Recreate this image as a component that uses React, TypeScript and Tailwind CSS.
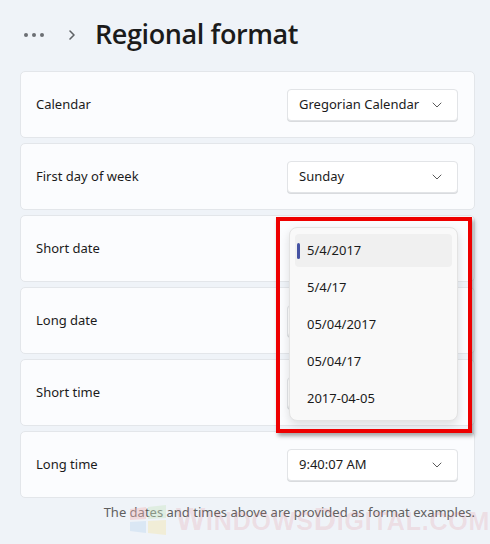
import React from "react";

const font = { fontFamily: '"Noto Sans", "Open Sans", sans-serif' };

function Chevron() {
  return (
    <svg width="10" height="6" viewBox="0 0 10 6" className="text-[#5a5a5a]">
      <path d="M1 1l4 4 4-4" fill="none" stroke="currentColor" strokeWidth="1" strokeLinecap="round" strokeLinejoin="round" />
    </svg>
  );
}

function Row({ label, value }: { label: string; value?: string }) {
  return (
    <div className="h-[67px] rounded-[5px] border border-[#e3e6ea] bg-[#fbfcfe] flex items-center pl-[15px] pr-[16px]">
      <div className="flex-1 text-[13px] text-[#1b1b1b]">{label}</div>
      {value !== undefined && (
        <div className="w-[171px] h-[32px] rounded-[4px] border border-[#e2e4e7] bg-white flex items-center pl-[11px] pr-[15px] shadow-[0_1px_0_#d9dbde]">
          <span className="flex-1 text-[13px] text-[#1b1b1b]">{value}</span>
          <Chevron />
        </div>
      )}
    </div>
  );
}

export default function App() {
  const items = ["5/4/2017", "5/4/17", "05/04/2017", "05/04/17", "2017-04-05"];
  return (
    <div className="relative w-[490px] h-[544px] bg-[#eff3f8] overflow-hidden" style={font}>
      <div className="flex items-center h-[68px] pl-[24px]">
        <div className="flex gap-[4px] items-center mr-[24px] mt-[1px]">
          <span className="w-[4px] h-[4px] rounded-full bg-[#6b6e73]" />
          <span className="w-[4px] h-[4px] rounded-full bg-[#6b6e73]" />
          <span className="w-[4px] h-[4px] rounded-full bg-[#6b6e73]" />
        </div>
        <svg width="8" height="12" viewBox="0 0 8 12" className="mr-[19px] mt-[1px]">
          <path d="M2 2l4 4-4 4" fill="none" stroke="#5f6266" strokeWidth="1.6" strokeLinecap="round" strokeLinejoin="round" />
        </svg>
        <h1 className="text-[27px] font-semibold text-[#1b1b1b] tracking-[-0.4px]" style={{ fontFamily: '"Open Sans", "Noto Sans", sans-serif' }}>
          Regional format
        </h1>
      </div>
      <div className="flex flex-col gap-[5px] pl-[20px] pr-[15px] mt-[3px]">
        <Row label="Calendar" value="Gregorian Calendar" />
        <Row label="First day of week" value="Sunday" />
        <Row label="Short date" />
        <Row label="Long date" value="" />
        <Row label="Short time" value="" />
        <Row label="Long time" value="9:40:07 AM" />
      </div>
      <div className="text-right pr-[15px] mt-[5px] text-[13px] text-[#5f5f5f]">
        The dates and times above are provided as format examples.
      </div>

      {/* dropdown popup */}
      <div className="absolute left-[289px] top-[227px] w-[169px] h-[194px] rounded-[8px] bg-[#f9f9f9] border border-[#e3e3e3] shadow-[0_4px_10px_rgba(0,0,0,0.12)] px-[5px] pt-[6px] flex flex-col gap-[4px]">
        {items.map((t, i) => (
          <div
            key={t}
            className={`relative h-[33px] rounded-[4px] flex items-center pl-[12px] text-[13px] text-[#1b1b1b] ${i === 0 ? "bg-[#f0f0f0]" : ""}`}
          >
            {i === 0 && <span className="absolute left-[2px] top-[9px] w-[3px] h-[16px] rounded-full bg-[#4653a3]" />}
            {t}
          </div>
        ))}
      </div>

      {/* red annotation box */}
      <div className="absolute left-[276px] top-[217px] w-[196px] h-[216px] border-[4px] border-[#ee0000] shadow-[2px_3px_4px_rgba(0,0,0,0.35)]" />

      {/* watermark */}
      <div className="absolute left-[130px] top-[504px] flex items-center gap-[10px] pointer-events-none">
        <svg width="36" height="30" viewBox="0 0 36 30" className="opacity-40">
          <polygon points="0,4 16,2 16,14 0,15" fill="#f4b6b6" />
          <polygon points="18,2 36,0 36,13 18,14" fill="#c8e6c0" />
          <polygon points="0,17 16,16 16,28 0,26" fill="#bcd6ef" />
          <polygon points="18,16 36,15 36,30 18,28" fill="#f6e6a8" />
        </svg>
        <span className="text-[31px] font-extrabold text-[rgba(225,110,120,0.17)] tracking-[0.8px] leading-none" style={{ fontFamily: '"Liberation Sans", sans-serif' }}>
          W<span className="text-[25px]">INDOWS</span>D<span className="text-[25px]">IGITAL.COM</span>
        </span>
      </div>
    </div>
  );
}
